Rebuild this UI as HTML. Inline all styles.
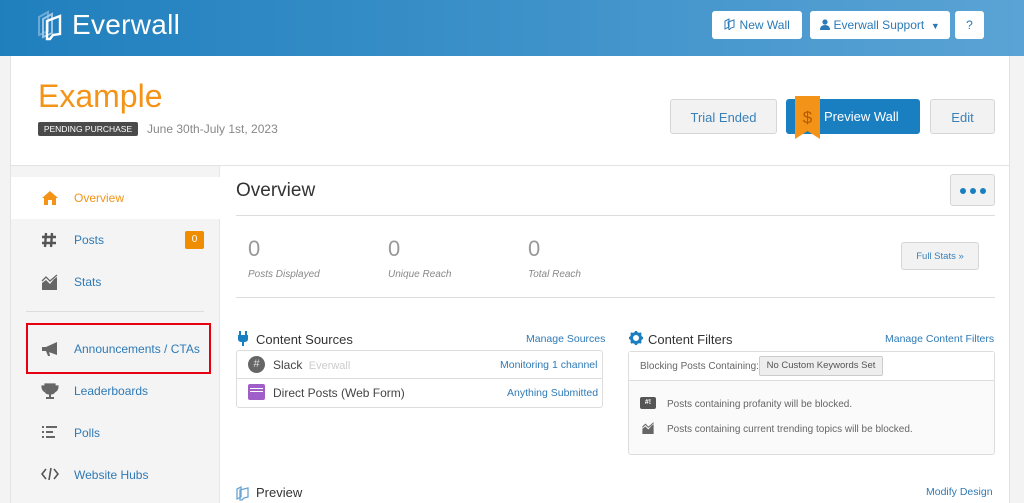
<!DOCTYPE html>
<html><head><meta charset="utf-8"><style>
*{box-sizing:border-box;margin:0;padding:0}
body{width:1024px;height:503px;overflow:hidden;background:#f3f3f3;font-family:"Liberation Sans",sans-serif;position:relative}
.a{position:absolute}
.hdr{left:0;top:0;width:1024px;height:56px;background:linear-gradient(90deg,#1f7fbd,#5aa3d5)}
.card{left:10px;top:56px;width:1000px;height:447px;background:#fff;border-left:1px solid #e2e2e2;border-right:1px solid #e2e2e2}
.hb{background:#fff;border-radius:3px;color:#2a7ab8;font-size:12px;height:28px;line-height:28px;text-align:center}
.btn{background:#f2f2f2;border:1px solid #d6d6d6;border-radius:3px;color:#3a80b8;text-align:center}
.side{left:11px;top:166px;width:209px;height:337px;background:#f4f4f4;border-right:1px solid #e6e6e6}
.nav{left:11px;width:209px;height:42px;font-size:12px;color:#2e7ab6;line-height:42px;padding-left:63px}
.nav svg{position:absolute;left:30px;top:13px}
.lnk{color:#2e7ab6;font-size:10.5px}
</style></head><body>
<div class="a hdr"></div>
<svg class="a" style="left:36px;top:9px" width="30" height="32" viewBox="0 0 30 32"><path d="M3 8 L12 3 V22 L3 26Z" fill="none" stroke="#6ea9d6" stroke-width="2"/><path d="M7 10 L16 5 V24 L7 28Z" fill="none" stroke="#9cc6e6" stroke-width="2"/><path d="M11 12 L24 7 V25 L17 26 L14 30 L11 30Z" fill="none" stroke="#fff" stroke-width="2.4"/></svg>
<div class="a" style="left:72px;top:9px;color:#fff;font-size:28px;letter-spacing:.3px">Everwall</div>
<div class="a hb" style="left:712px;top:11px;width:90px"><svg width="12" height="12" viewBox="0 0 12 12" style="vertical-align:-1px"><path d="M1 3L5 1V9L1 11Z M4 4L10 2V9L7 10L5 12Z" fill="none" stroke="#2a7ab8"/></svg> New Wall</div>
<div class="a hb" style="left:810px;top:11px;width:140px"><svg width="10" height="11" viewBox="0 0 10 11" style="vertical-align:-1px"><circle cx="5" cy="3" r="2.6" fill="#2a7ab8"/><path d="M0 11Q0 6 5 6Q10 6 10 11Z" fill="#2a7ab8"/></svg> Everwall Support &nbsp;<span style="font-size:9px">&#9660;</span></div>
<div class="a hb" style="left:955px;top:11px;width:29px">?</div>
<div class="a card"></div>
<div class="a" style="left:38px;top:78px;color:#f39419;font-size:32px">Example</div>
<div class="a" style="left:38px;top:122px;width:100px;height:14px;background:#4a4a4a;border-radius:2px;color:#fff;font-size:8.5px;line-height:14px;text-align:center">PENDING PURCHASE</div>
<div class="a" style="left:147px;top:122px;font-size:12px;color:#888">June 30th-July 1st, 2023</div>
<div class="a btn" style="left:670px;top:99px;width:107px;height:35px;line-height:35px;font-size:13px">Trial Ended</div>
<div class="a" style="left:786px;top:99px;width:134px;height:35px;background:#1a7fc0;border-radius:3px;color:#fff;font-size:13px;line-height:35px;padding-left:38px">Preview Wall</div>
<svg class="a" style="left:795px;top:96px" width="25" height="43"><path d="M0 0H25V43L12.5 35L0 43Z" fill="#f39419"/><text x="12.5" y="27" font-size="17" text-anchor="middle" fill="#b35a00" font-family="Liberation Sans">$</text></svg>
<div class="a btn" style="left:930px;top:99px;width:65px;height:35px;line-height:35px;font-size:13px">Edit</div>
<div class="a" style="left:11px;top:165px;width:998px;height:1px;background:#e3e3e3"></div>
<div class="a side"></div>
<div class="a" style="left:11px;top:177px;width:209px;height:42px;background:#fff"></div>
<div class="a nav" style="top:177px;color:#f39419"><svg width="18" height="16" viewBox="0 0 18 16"><path d="M9 1L1 8H3V15H7V10H11V15H15V8H17Z" fill="#f39419"/></svg>Overview</div>
<div class="a nav" style="top:219px"><svg width="16" height="16" viewBox="0 0 16 16"><path d="M5 1L4 15M11 1L10 15M1 5H15M1 11H15" stroke="#555" stroke-width="2.4" fill="none"/></svg>Posts</div>
<div class="a" style="left:185px;top:231px;width:19px;height:18px;background:#f08c00;border-radius:2px;color:#fff;font-size:10px;line-height:18px;text-align:center">0</div>
<div class="a nav" style="top:261px"><svg width="17" height="16" viewBox="0 0 17 16"><path d="M1 16V9L5 6L9 10L13 5L16 3V16Z" fill="#666"/><path d="M1 7L5 3L9 7L16 1" stroke="#666" fill="none" stroke-width="1.3"/></svg>Stats</div>
<div class="a" style="left:26px;top:311px;width:178px;height:1px;background:#ddd"></div>
<div class="a nav" style="top:328px"><svg width="18" height="16" viewBox="0 0 18 16"><path d="M1 6H5L16 1V14L5 10H1Z" fill="#666"/><path d="M5 10L7 15H9L8 10Z" fill="#666"/></svg>Announcements / CTAs</div>
<div class="a" style="left:26px;top:323px;width:185px;height:51px;border:2px solid #e6000f"></div>
<div class="a nav" style="top:370px"><svg width="18" height="17" viewBox="0 0 18 17"><path d="M4 1H14V7Q14 11 9 11Q4 11 4 7Z M4 3H1Q1 8 5 9 M14 3H17Q17 8 13 9" fill="#666" stroke="#666" stroke-width="1.2"/><path d="M8 11H10V14H13V16H5V14H8Z" fill="#666"/></svg>Leaderboards</div>
<div class="a nav" style="top:412px"><svg width="17" height="14" viewBox="0 0 17 14"><path d="M1 1H3V3H1ZM5 1H16V3H5ZM1 6H3V8H1ZM5 6H12V8H5ZM1 11H3V13H1ZM5 11H14V13H5Z" fill="#666"/></svg>Polls</div>
<div class="a nav" style="top:454px"><svg width="18" height="14" viewBox="0 0 18 14"><path d="M5 2L1 7L5 12M13 2L17 7L13 12M10 1L8 13" stroke="#555" stroke-width="1.6" fill="none"/></svg>Website Hubs</div>
<div class="a" style="left:236px;top:180px;font-size:19px;color:#333">Overview</div>
<div class="a btn" style="left:950px;top:174px;width:45px;height:32px"><svg width="30" height="8" style="margin-top:12px"><circle cx="5" cy="4" r="3" fill="#1a7fc0"/><circle cx="15" cy="4" r="3" fill="#1a7fc0"/><circle cx="25" cy="4" r="3" fill="#1a7fc0"/></svg></div>
<div class="a" style="left:236px;top:215px;width:759px;height:1px;background:#ddd"></div>
<div class="a" style="left:248px;top:236px;font-size:22px;color:#999">0</div>
<div class="a" style="left:388px;top:236px;font-size:22px;color:#999">0</div>
<div class="a" style="left:528px;top:236px;font-size:22px;color:#999">0</div>
<div class="a" style="left:248px;top:269px;font-size:10px;color:#888;font-style:italic">Posts Displayed</div>
<div class="a" style="left:388px;top:269px;font-size:10px;color:#888;font-style:italic">Unique Reach</div>
<div class="a" style="left:528px;top:269px;font-size:10px;color:#888;font-style:italic">Total Reach</div>
<div class="a btn" style="left:901px;top:242px;width:78px;height:28px;line-height:28px;font-size:9.5px">Full Stats »</div>
<div class="a" style="left:236px;top:297px;width:759px;height:1px;background:#ddd"></div>
<svg class="a" style="left:238px;top:331px" width="12" height="15" viewBox="0 0 12 15"><path d="M2 0V4M8 0V4" stroke="#1a7fc0" stroke-width="2"/><path d="M0 4H10V8Q10 11 6 11V15H4V11Q0 11 0 8Z" fill="#1a7fc0"/></svg>
<div class="a" style="left:256px;top:332px;font-size:13px;color:#333">Content Sources</div>
<div class="a lnk" style="left:526px;top:333px">Manage Sources</div>
<div class="a" style="left:236px;top:350px;width:367px;height:58px;border:1px solid #ddd;border-radius:3px"></div>
<div class="a" style="left:237px;top:378px;width:365px;height:1px;background:#ddd"></div>
<div class="a" style="left:248px;top:356px;width:17px;height:17px;border-radius:50%;background:#666;color:#ddd;font-size:11px;text-align:center;line-height:17px">#</div>
<div class="a" style="left:273px;top:358px;font-size:12px;color:#444">Slack <span style="color:#ccc;font-size:11px">&nbsp;Everwall</span></div>
<div class="a lnk" style="left:500px;top:359px">Monitoring 1 channel</div>
<div class="a" style="left:248px;top:384px;width:17px;height:16px;background:#a05ec8;border-radius:2px"><div style="margin:4px 2px;height:4px;border-top:1px solid #fff;border-bottom:1px solid #fff"></div></div>
<div class="a" style="left:273px;top:386px;font-size:12px;color:#444">Direct Posts (Web Form)</div>
<div class="a lnk" style="left:507px;top:387px">Anything Submitted</div>
<svg class="a" style="left:629px;top:331px" width="14" height="14" viewBox="0 0 14 14"><circle cx="7" cy="7" r="4.5" fill="none" stroke="#1a7fc0" stroke-width="3"/><path d="M7 0V3M7 11V14M0 7H3M11 7H14M2 2L4 4M10 10L12 12M12 2L10 4M4 10L2 12" stroke="#1a7fc0" stroke-width="2.4"/></svg>
<div class="a" style="left:648px;top:332px;font-size:13px;color:#333">Content Filters</div>
<div class="a lnk" style="left:885px;top:333px">Manage Content Filters</div>
<div class="a" style="left:628px;top:351px;width:367px;height:104px;border:1px solid #ddd;border-radius:3px;background:#fafafa"></div>
<div class="a" style="left:629px;top:352px;width:365px;height:29px;background:#fff;border-bottom:1px solid #ddd"></div>
<div class="a" style="left:640px;top:361px;font-size:10px;color:#666">Blocking Posts Containing:</div>
<div class="a" style="left:759px;top:356px;width:124px;height:20px;background:#eee;border:1px solid #ccc;border-radius:2px;font-size:9.5px;color:#555;line-height:18px;text-align:center;white-space:nowrap">No Custom Keywords Set</div>
<div class="a" style="left:640px;top:397px;width:16px;height:12px;background:#555;border-radius:2px;color:#fff;font-size:7px;text-align:center;line-height:12px;font-weight:bold">#!</div>
<div class="a" style="left:667px;top:399px;font-size:10px;color:#666">Posts containing profanity will be blocked.</div>
<svg class="a" style="left:640px;top:422px" width="16" height="12" viewBox="0 0 17 16"><path d="M1 16V9L5 6L9 10L13 5L16 3V16Z" fill="#666"/><path d="M1 7L5 3L9 7L16 1" stroke="#666" fill="none" stroke-width="1.3"/></svg>
<div class="a" style="left:667px;top:424px;font-size:10px;color:#666">Posts containing current trending topics will be blocked.</div>
<svg class="a" style="left:236px;top:485px" width="14" height="16" viewBox="0 0 14 16"><path d="M1 4L5 2V12L1 14Z M4 5L12 3V12L8 13L6 15H4Z" fill="none" stroke="#6aa5d4" stroke-width="1.3"/></svg>
<div class="a" style="left:256px;top:485px;font-size:13px;color:#333">Preview</div>
<div class="a lnk" style="left:926px;top:486px">Modify Design</div>
</body></html>
